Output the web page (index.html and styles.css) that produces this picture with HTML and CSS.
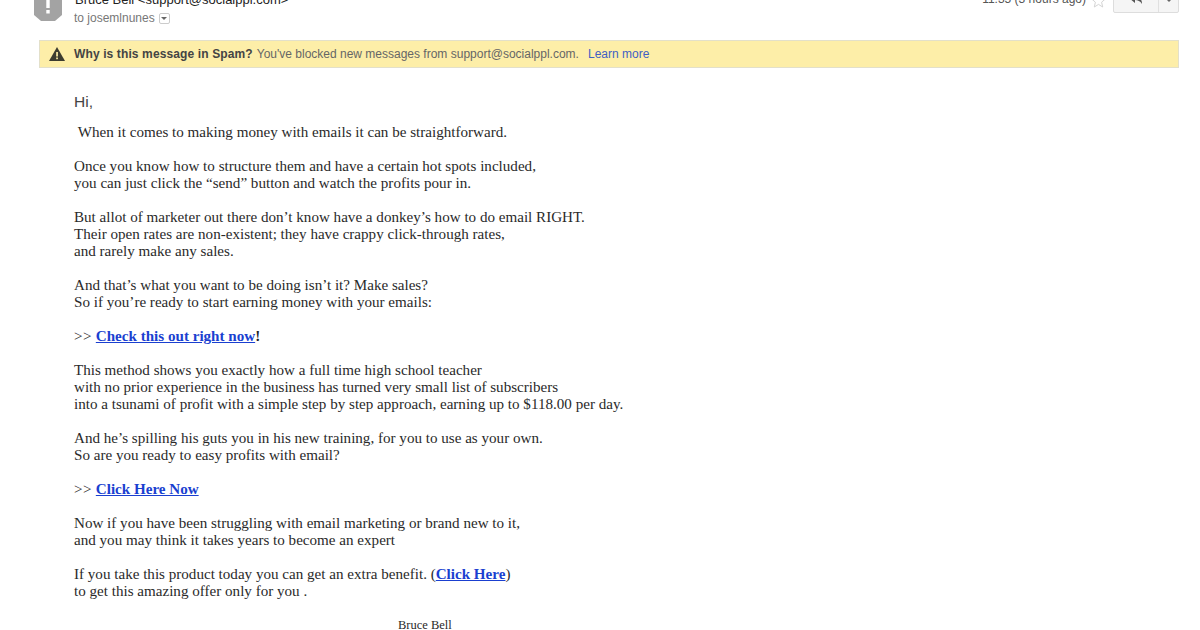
FILE: index.html
```html
<!DOCTYPE html>
<html lang="en">
<head>
<meta charset="utf-8">
<title>Spam message</title>
<link rel="stylesheet" href="styles.css">
</head>
<body>
<div class="page">
  <header class="head">
    <svg class="avatar" width="28" height="30" viewBox="0 0 28 30"><path d="M7 0H21L28 7V24L21 30H7L0 24V7Z" fill="#a3a3a3"/><rect x="12.300" y="6" width="3.400" height="11" fill="#fff"/><rect x="12.300" y="19" width="3.400" height="3.500" fill="#fff"/></svg>
    <div class="who">
      <div class="sender"><b>Bruce Bell</b> &lt;support@socialppl.com&gt;</div>
      <div class="to">to josemlnunes <span class="caret-box"><i class="caret"></i></span></div>
    </div>
    <div class="meta">
      <span class="time">11:35 (3 hours ago)</span>
      <svg class="star" width="15" height="15" viewBox="0 0 15 15"><path d="M7.500 1L9.400 5.600L14.300 6L10.600 9.200L11.700 14L7.500 11.400L3.300 14L4.400 9.200L0.700 6L5.600 5.600Z" fill="#fff" stroke="#d4d4d4"/></svg>
      <div class="btns">
        <span class="btn reply"><svg width="16" height="12" viewBox="0 0 16 12"><path d="M7 0L1 5L7 10V7C10 7 12 8 14 11C14 6 11 3 7 3Z" fill="#555"/></svg></span>
        <span class="btn more"><i class="caret"></i></span>
      </div>
    </div>
  </header>

  <div class="banner">
    <svg class="warn" width="16" height="14" viewBox="0 0 16 14"><path d="M8 0L16 14H0Z" fill="#3c3c30"/><rect x="7.200" y="5" width="1.700" height="4.500" fill="#fdeea8"/><rect x="7.200" y="10.500" width="1.700" height="1.700" fill="#fdeea8"/></svg>
    <b class="why">Why is this message in Spam?</b>
    <span class="reason">You've blocked new messages from support@socialppl.com.</span>
    <a class="learn" href="#">Learn more</a>
  </div>

  <main class="mail">
    <p class="hi">Hi,</p>
    <p>&nbsp;When it comes to making money with emails it can be straightforward.</p>
    <p>Once you know how to structure them and have a certain hot spots included,<br>you can just click the “send” button and watch the profits pour in.</p>
    <p>But allot of marketer out there don’t know have a donkey’s how to do email RIGHT.<br>Their open rates are non-existent; they have crappy click-through rates,<br>and rarely make any sales.</p>
    <p>And that’s what you want to be doing isn’t it? Make sales?<br>So if you’re ready to start earning money with your emails:</p>
    <p><span class="arrows">&gt;&gt;</span> <a href="#">Check this out right now</a><b class="bang">!</b></p>
    <p>This method shows you exactly how a full time high school teacher<br>with no prior experience in the business has turned very small list of subscribers<br>into a tsunami of profit with a simple step by step approach, earning up to $118.00 per day.</p>
    <p>And he’s spilling his guts you in his new training, for you to use as your own.<br>So are you ready to easy profits with email?</p>
    <p><span class="arrows">&gt;&gt;</span> <a href="#">Click Here Now</a></p>
    <p>Now if you have been struggling with email marketing or brand new to it,<br>and you may think it takes years to become an expert</p>
    <p>If you take this product today you can get an extra benefit. (<a href="#">Click Here</a>)<br>to get this amazing offer only for you .</p>
    <p class="sign">Bruce Bell</p>
  </main>
</div>
</body>
</html>
```
FILE: styles.css
```css
html, body {
  margin: 0;
  padding: 0;
  height: 630px;
  overflow: hidden;
  background: #fff;
}

.page {
  width: 1200px;
  margin-top: -9px;
  font-family: "Liberation Sans", Arial, sans-serif;
  color: #222;
}

.head {
  display: flex;
  height: 49px;
  padding: 0 21px 0 34px;
  box-sizing: border-box;
}

.avatar {
  flex: none;
  display: block;
}

.who {
  margin-left: 12px;
  flex: 1;
  font-size: 13px;
  line-height: 17px;
}

.sender {
  color: #222;
  margin-left: 1px;
}

.sender b {
  font-weight: normal;
}

.to {
  color: #777;
  margin-top: 2px;
  font-size: 12px;
  display: flex;
  align-items: center;
  gap: 4px;
}

.caret-box {
  width: 9px;
  height: 9px;
  border: 1px solid #ccc;
  border-radius: 2px;
  display: flex;
  align-items: center;
  justify-content: center;
}

.caret {
  display: block;
  width: 0;
  height: 0;
  border-left: 3px solid transparent;
  border-right: 3px solid transparent;
  border-top: 3px solid #666;
}

.meta {
  display: flex;
  align-items: flex-start;
  font-size: 12px;
  color: #555;
}

.time {
  line-height: 17px;
  margin-right: 5px;
}

.star {
  margin: 2px 7px 0 0;
}

.btns {
  display: flex;
  height: 20px;
  border: 1px solid #ddd;
  border-radius: 2px;
  background: #f5f5f5;
}

.btn {
  display: flex;
  align-items: center;
  justify-content: center;
}

.reply {
  width: 45px;
  padding-bottom: 7px;
  box-sizing: border-box;
  border-right: 1px solid #e0e0e0;
}

.more {
  width: 19px;
  padding-bottom: 4px;
  box-sizing: border-box;
}

.banner {
  display: flex;
  align-items: center;
  height: 26px;
  margin: 0 21px 0 39px;
  background: #fdeea8;
  border: 1px solid #e3e0ca;
  font-size: 12px;
  color: #666;
}

.warn {
  flex: none;
  margin-left: 9px;
}

.why {
  margin-left: 9px;
  color: #444;
  letter-spacing: 0.12px;
}

.reason {
  margin-left: 4px;
}

.learn {
  margin-left: 9px;
  color: #3f5fc4;
  text-decoration: none;
}

.mail {
  padding: 25px 0 0 74px;
  font-family: "Liberation Serif", "Times New Roman", serif;
  font-size: 15.1px;
  line-height: 17px;
  color: #2a2a2a;
}

.mail p {
  margin: 0 0 17px;
  white-space: nowrap;
}

.mail .hi {
  font-family: "Liberation Sans", Arial, sans-serif;
  font-size: 15.5px;
  color: #444;
  margin-bottom: 14px;
}

.arrows {
  letter-spacing: 0.5px;
}

.mail a {
  color: #1a3fd0;
  font-weight: bold;
  text-decoration: underline;
}

.bang {
  color: #222;
}

.mail .sign {
  margin: 0 0 0 324px;
  font-size: 12.500px;
}
```
